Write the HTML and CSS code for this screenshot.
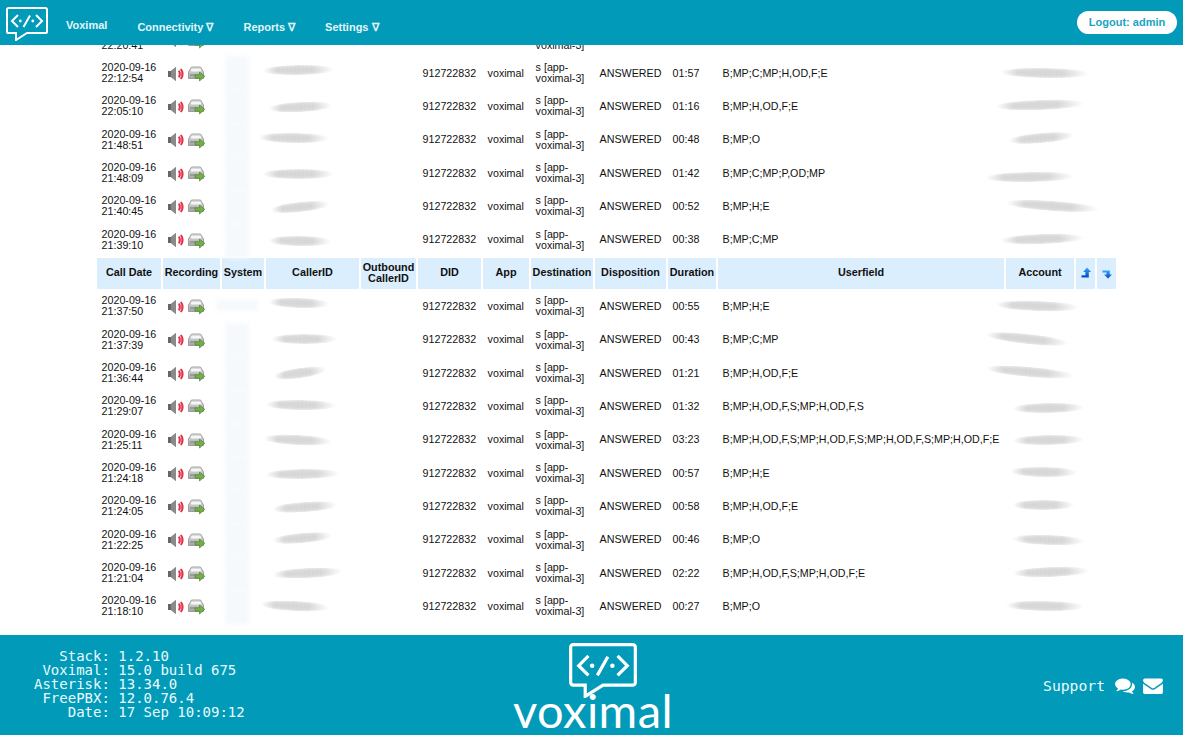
FILE: index.html
```html
<!DOCTYPE html>
<html lang="en">
<head>
<meta charset="utf-8">
<title>Voximal - CDR</title>
<link rel="stylesheet" href="styles.css">
</head>
<body>
<svg class="defs" width="0" height="0" aria-hidden="true">
  <defs>
    <linearGradient id="blue" x1="0" y1="0" x2="0" y2="1"><stop offset="0" stop-color="#3aa6ff"/><stop offset="1" stop-color="#0048c0"/></linearGradient>
    <linearGradient id="metal" x1="0" y1="0" x2="0" y2="1"><stop offset="0" stop-color="#e4e4e4"/><stop offset="1" stop-color="#a4a4a4"/></linearGradient>
    <symbol id="logo" viewBox="0 0 42 34">
      <path d="M2.600 1h36.800a1.600 1.600 0 0 1 1.600 1.600v21.800a1.600 1.600 0 0 1-1.600 1.600H21L10 33V26H2.600A1.600 1.600 0 0 1 1 24.400V2.600A1.600 1.600 0 0 1 2.600 1z" fill="none" stroke="#fff" stroke-width="2"/>
      <path d="M12 8 6 14 12 20M30 8 36 14 30 20M17.500 20 24 8.500" fill="none" stroke="#fff" stroke-width="2"/>
      <circle cx="14.300" cy="14" r="1.400" fill="#fff"/><circle cx="26.800" cy="14" r="1.400" fill="#fff"/>
    </symbol>
    <symbol id="spk" viewBox="0 0 17 14">
      <path d="M0 4h3l5-4v14l-5-4H0z" fill="#666"/><path d="M3 4l5-4v14l-5-4z" fill="#8a8a8a"/>
      <path d="M11.500 3c1.600 2.200 1.600 5.800 0 8l-1.500-1.200c1-1.500 1-4 0-5.600z" fill="#e0304a"/>
      <path d="M13.500 1.500c2.800 3 2.800 8 0 11l-1.500-1c2.300-2.800 2.300-6.200 0-9z" fill="#e0304a"/>
      <ellipse cx="13" cy="7" rx="1.200" ry="2.600" fill="#f0606f"/>
    </symbol>
    <symbol id="disk" viewBox="0 0 17 16">
      <path d="M3.500 1h9L15.500 6v6.500H.5V6z" fill="url(#metal)" stroke="#8f8f8f" stroke-width=".8"/>
      <rect x="3" y="3" width="10" height="2.600" rx="1" fill="#f6f6f6"/>
      <rect x="2" y="8" width="6" height="2" fill="#9a9a9a"/>
      <path d="M7 8.700h4.500V6L16.800 10.300 11.500 15v-2.800H7z" fill="#76ad4c" stroke="#4b8a2c" stroke-width=".7"/>
    </symbol>
    <symbol id="up" viewBox="0 0 10 11">
      <path d="M6 .500 10 5H7.800V10.500H.5V8.200H4.400V5H2.200z" fill="url(#blue)"/>
    </symbol>
    <symbol id="down" viewBox="0 0 10 9">
      <path d="M.5.500H7.800V4.500H10L6 8.500 2 4.500H4.500V2.500H.5z" fill="url(#blue)"/>
    </symbol>
  </defs>
</svg>

<header class="topbar">
  <svg class="logo-small"><use href="#logo"/></svg>
  <nav class="nav">
    <a class="nav-link nav-home">Voximal</a>
    <a class="nav-link">Connectivity ∇</a>
    <a class="nav-link">Reports ∇</a>
    <a class="nav-link">Settings ∇</a>
  </nav>
  <a class="logout">Logout: admin</a>
</header>

<main class="content">
<table class="cdr">
  <colgroup>
    <col class="c64"><col class="c57"><col class="c42"><col class="c93"><col class="c55"><col class="c63"><col class="c46"><col class="c62"><col class="c71"><col class="c48"><col class="c286"><col class="c68"><col class="c19"><col class="c19">
  </colgroup>
  <tbody>
  <tr><td>2020-09-16<br>22:20:41</td><td><span class="rec"><svg class="spk"><use href="#spk"/></svg><svg class="disk"><use href="#disk"/></svg></span></td><td></td><td></td><td></td><td>912722832</td><td>voximal</td><td>s [app-<br>voximal-3]</td><td>ANSWERED</td><td>00:31</td><td>B;MP;O</td><td></td><td></td><td></td></tr>

  <tr><td>2020-09-16<br>22:12:54</td><td><span class="rec"><svg class="spk"><use href="#spk"/></svg><svg class="disk"><use href="#disk"/></svg></span></td><td class="sm"><i class="sys"></i></td><td class="sm"><i class="blur" style="--l:-4px;--w:73px;--y:-4px;--r:-1deg"></i></td><td></td><td>912722832</td><td>voximal</td><td>s [app-<br>voximal-3]</td><td>ANSWERED</td><td>01:57</td><td>B;MP;C;MP;H,OD,F;E</td><td class="sm"><i class="blur" style="--l:-6px;--w:90px;--y:-1px;--r:1deg"></i></td><td></td><td></td></tr>

  <tr><td>2020-09-16<br>22:05:10</td><td><span class="rec"><svg class="spk"><use href="#spk"/></svg><svg class="disk"><use href="#disk"/></svg></span></td><td class="sm"><i class="sys"></i></td><td class="sm"><i class="blur" style="--l:2px;--w:65px;--y:0px;--r:-3deg"></i></td><td></td><td>912722832</td><td>voximal</td><td>s [app-<br>voximal-3]</td><td>ANSWERED</td><td>01:16</td><td>B;MP;H,OD,F;E</td><td class="sm"><i class="blur" style="--l:-11px;--w:90px;--y:-2px;--r:-2deg"></i></td><td></td><td></td></tr>

  <tr><td>2020-09-16<br>21:48:51</td><td><span class="rec"><svg class="spk"><use href="#spk"/></svg><svg class="disk"><use href="#disk"/></svg></span></td><td class="sm"><i class="sys"></i></td><td class="sm"><i class="blur" style="--l:-8px;--w:72px;--y:-2px;--r:1deg"></i></td><td></td><td>912722832</td><td>voximal</td><td>s [app-<br>voximal-3]</td><td>ANSWERED</td><td>00:48</td><td>B;MP;O</td><td class="sm"><i class="blur" style="--l:2px;--w:67px;--y:-2px;--r:-5deg"></i></td><td></td><td></td></tr>

  <tr><td>2020-09-16<br>21:48:09</td><td><span class="rec"><svg class="spk"><use href="#spk"/></svg><svg class="disk"><use href="#disk"/></svg></span></td><td class="sm"><i class="sys"></i></td><td class="sm"><i class="blur" style="--l:-4px;--w:73px;--y:0px;--r:0deg"></i></td><td></td><td>912722832</td><td>voximal</td><td>s [app-<br>voximal-3]</td><td>ANSWERED</td><td>01:42</td><td>B;MP;C;MP;P,OD;MP</td><td class="sm"><i class="blur" style="--l:-21px;--w:90px;--y:3px;--r:-1deg"></i></td><td></td><td></td></tr>

  <tr><td>2020-09-16<br>21:40:45</td><td><span class="rec"><svg class="spk"><use href="#spk"/></svg><svg class="disk"><use href="#disk"/></svg></span></td><td class="sm"><i class="sys"></i></td><td class="sm"><i class="blur" style="--l:4px;--w:60px;--y:0px;--r:-6deg"></i></td><td></td><td>912722832</td><td>voximal</td><td>s [app-<br>voximal-3]</td><td>ANSWERED</td><td>00:52</td><td>B;MP;H;E</td><td class="sm"><i class="blur" style="--l:-1px;--w:95px;--y:-1px;--r:4deg"></i></td><td></td><td></td></tr>

  <tr><td>2020-09-16<br>21:39:10</td><td><span class="rec"><svg class="spk"><use href="#spk"/></svg><svg class="disk"><use href="#disk"/></svg></span></td><td class="sm"><i class="sys"></i></td><td class="sm"><i class="blur" style="--l:2px;--w:64px;--y:1px;--r:1deg"></i></td><td></td><td>912722832</td><td>voximal</td><td>s [app-<br>voximal-3]</td><td>ANSWERED</td><td>00:38</td><td>B;MP;C;MP</td><td class="sm"><i class="blur" style="--l:-6px;--w:85px;--y:-1px;--r:-2deg"></i></td><td></td><td></td></tr>

  <tr class="head"><th>Call Date</th><th>Recording</th><th>System</th><th>CallerID</th><th>Outbound CallerID</th><th>DID</th><th>App</th><th>Destination</th><th>Disposition</th><th>Duration</th><th>Userfield</th><th>Account</th><th><svg class="arrow-up"><use href="#up"/></svg></th><th><svg class="arrow-down"><use href="#down"/></svg></th></tr>

  <tr><td>2020-09-16<br>21:37:50</td><td><span class="rec"><svg class="spk"><use href="#spk"/></svg><svg class="disk"><use href="#disk"/></svg></span></td><td class="sm"><i class="sys sys-wide"></i></td><td class="sm"><i class="blur" style="--l:2px;--w:62px;--y:-4px;--r:2deg"></i></td><td></td><td>912722832</td><td>voximal</td><td>s [app-<br>voximal-3]</td><td>ANSWERED</td><td>00:55</td><td>B;MP;H;E</td><td class="sm"><i class="blur" style="--l:-11px;--w:85px;--y:-1px;--r:2deg"></i></td><td></td><td></td></tr>

  <tr><td>2020-09-16<br>21:37:39</td><td><span class="rec"><svg class="spk"><use href="#spk"/></svg><svg class="disk"><use href="#disk"/></svg></span></td><td class="sm"><i class="sys"></i></td><td class="sm"><i class="blur" style="--l:5px;--w:67px;--y:-1px;--r:0deg"></i></td><td></td><td>912722832</td><td>voximal</td><td>s [app-<br>voximal-3]</td><td>ANSWERED</td><td>00:43</td><td>B;MP;C;MP</td><td class="sm"><i class="blur" style="--l:-21px;--w:85px;--y:-1px;--r:6deg"></i></td><td></td><td></td></tr>

  <tr><td>2020-09-16<br>21:36:44</td><td><span class="rec"><svg class="spk"><use href="#spk"/></svg><svg class="disk"><use href="#disk"/></svg></span></td><td class="sm"><i class="sys"></i></td><td class="sm"><i class="blur" style="--l:7px;--w:54px;--y:-1px;--r:-8deg"></i></td><td></td><td>912722832</td><td>voximal</td><td>s [app-<br>voximal-3]</td><td>ANSWERED</td><td>01:21</td><td>B;MP;H,OD,F;E</td><td class="sm"><i class="blur" style="--l:-21px;--w:90px;--y:-2px;--r:5deg"></i></td><td></td><td></td></tr>

  <tr><td>2020-09-16<br>21:29:07</td><td><span class="rec"><svg class="spk"><use href="#spk"/></svg><svg class="disk"><use href="#disk"/></svg></span></td><td class="sm"><i class="sys"></i></td><td class="sm"><i class="blur" style="--l:-1px;--w:72px;--y:-2px;--r:1deg"></i></td><td></td><td>912722832</td><td>voximal</td><td>s [app-<br>voximal-3]</td><td>ANSWERED</td><td>01:32</td><td>B;MP;H,OD,F,S;MP;H,OD,F,S</td><td class="sm"><i class="blur" style="--l:6px;--w:73px;--y:1px;--r:-1deg"></i></td><td></td><td></td></tr>

  <tr><td>2020-09-16<br>21:25:11</td><td><span class="rec"><svg class="spk"><use href="#spk"/></svg><svg class="disk"><use href="#disk"/></svg></span></td><td class="sm"><i class="sys"></i></td><td class="sm"><i class="blur" style="--l:-3px;--w:70px;--y:0px;--r:3deg"></i></td><td></td><td>912722832</td><td>voximal</td><td>s [app-<br>voximal-3]</td><td>ANSWERED</td><td>03:23</td><td>B;MP;H,OD,F,S;MP;H,OD,F,S;MP;H,OD,F,S;MP;H,OD,F;E</td><td class="sm"><i class="blur" style="--l:6px;--w:73px;--y:0px;--r:-1deg"></i></td><td></td><td></td></tr>

  <tr><td>2020-09-16<br>21:24:18</td><td><span class="rec"><svg class="spk"><use href="#spk"/></svg><svg class="disk"><use href="#disk"/></svg></span></td><td class="sm"><i class="sys"></i></td><td class="sm"><i class="blur" style="--l:-1px;--w:75px;--y:0px;--r:-1deg"></i></td><td></td><td>912722832</td><td>voximal</td><td>s [app-<br>voximal-3]</td><td>ANSWERED</td><td>00:57</td><td>B;MP;H;E</td><td class="sm"><i class="blur" style="--l:4px;--w:68px;--y:-2px;--r:1deg"></i></td><td></td><td></td></tr>

  <tr><td>2020-09-16<br>21:24:05</td><td><span class="rec"><svg class="spk"><use href="#spk"/></svg><svg class="disk"><use href="#disk"/></svg></span></td><td class="sm"><i class="sys"></i></td><td class="sm"><i class="blur" style="--l:6px;--w:66px;--y:0px;--r:-4deg"></i></td><td></td><td>912722832</td><td>voximal</td><td>s [app-<br>voximal-3]</td><td>ANSWERED</td><td>00:58</td><td>B;MP;H,OD,F;E</td><td class="sm"><i class="blur" style="--l:6px;--w:63px;--y:-2px;--r:0deg"></i></td><td></td><td></td></tr>

  <tr><td>2020-09-16<br>21:22:25</td><td><span class="rec"><svg class="spk"><use href="#spk"/></svg><svg class="disk"><use href="#disk"/></svg></span></td><td class="sm"><i class="sys"></i></td><td class="sm"><i class="blur" style="--l:6px;--w:61px;--y:-2px;--r:-5deg"></i></td><td></td><td>912722832</td><td>voximal</td><td>s [app-<br>voximal-3]</td><td>ANSWERED</td><td>00:46</td><td>B;MP;O</td><td class="sm"><i class="blur" style="--l:6px;--w:73px;--y:0px;--r:2deg"></i></td><td></td><td></td></tr>

  <tr><td>2020-09-16<br>21:21:04</td><td><span class="rec"><svg class="spk"><use href="#spk"/></svg><svg class="disk"><use href="#disk"/></svg></span></td><td class="sm"><i class="sys"></i></td><td class="sm"><i class="blur" style="--l:6px;--w:71px;--y:-1px;--r:-3deg"></i></td><td></td><td>912722832</td><td>voximal</td><td>s [app-<br>voximal-3]</td><td>ANSWERED</td><td>02:22</td><td>B;MP;H,OD,F,S;MP;H,OD,F;E</td><td class="sm"><i class="blur" style="--l:6px;--w:78px;--y:-2px;--r:-2deg"></i></td><td></td><td></td></tr>

  <tr><td>2020-09-16<br>21:18:10</td><td><span class="rec"><svg class="spk"><use href="#spk"/></svg><svg class="disk"><use href="#disk"/></svg></span></td><td class="sm"><i class="sys"></i></td><td class="sm"><i class="blur" style="--l:-6px;--w:70px;--y:-1px;--r:3deg"></i></td><td></td><td>912722832</td><td>voximal</td><td>s [app-<br>voximal-3]</td><td>ANSWERED</td><td>00:27</td><td>B;MP;O</td><td class="sm"><i class="blur" style="--l:-1px;--w:80px;--y:-1px;--r:1deg"></i></td><td></td><td></td></tr>
  </tbody>
</table>
</main>

<footer class="bottombar">
  <pre class="versions">   Stack: 1.2.10
 Voximal: 15.0 build 675
Asterisk: 13.34.0
 FreePBX: 12.0.76.4
    Date: 17 Sep 10:09:12</pre>
  <div class="brand">
    <svg class="logo-large"><use href="#logo"/></svg>
    <span class="wordmark">voximal</span>
  </div>
  <div class="support">
    <span>Support</span>
    <svg class="fa" viewBox="0 128 1792 1536"><path d="M1408 768q0 139-94 257t-256.500 186.500-353.500 68.500q-86 0-176-16-124 88-278 128-36 9-86 16h-3q-11 0-20.500-8t-11.500-21q-1-3-1-6.500t.5-6.500 2-6l2.500-5 3.500-5.500 4-5 4.500-5 4-4.500q5-6 23-25t26-29.500 22.500-29 25-38.500 20.500-44q-124-72-195-177t-71-224q0-139 94-257t256.500-186.500 353.500-68.500 353.500 68.500 256.500 186.500 94 257zm384 256q0 120-71 224.500t-195 176.500q10 24 20.500 44t25 38.500 22.500 29 26 29.500 23 25q1 1 4 4.500t4.500 5 4 5 3.500 5.500l2.500 5 2 6 .5 6.500-1 6.500q-3 14-13 22t-22 7q-50-7-86-16-154-40-278-128-90 16-176 16-271 0-472-132 58 4 88 4 161 0 309-45t264-129q125-92 192-212t67-254q0-77-23-152 129 71 204 178t75 230z"/></svg>
    <svg class="fa" viewBox="0 128 1792 1536"><path d="M1792 710v794q0 66-47 113t-113 47h-1472q-66 0-113-47t-47-113v-794q44 49 101 87 362 246 497 345 57 42 92.500 65.500t94.500 48 110 24.500h2q51 0 110-24.500t94.500-48 92.500-65.500q170-123 498-345 57-39 100-87zm0-294q0 79-49 151t-122 123q-376 261-468 325-10 7-42.500 30.500t-54 38-52 32.500-57.500 27-50 9h-2q-23 0-50-9t-57.500-27-52-32.500-54-38-42.500-30.500q-91-64-262-182.500t-205-142.500q-62-42-117-115.500t-55-136.500q0-78 41.500-130t118.500-52h1472q65 0 112.500 47t47.500 113z"/></svg>
  </div>
</footer>
</body>
</html>
```

FILE: styles.css
```css
* { box-sizing: border-box; }
html, body { height: 100%; }
body {
  margin: 0;
  display: flex;
  flex-direction: column;
  height: 100vh;
  overflow: hidden;
  background: #fff;
  color: #111;
  font: 10.7px/11px "Liberation Sans", Arial, sans-serif;
}
.defs { position: absolute; }

/* top bar */
.topbar {
  position: relative;
  z-index: 2;
  flex: 0 0 45px;
  display: flex;
  align-items: center;
  padding: 0 6px;
  background: #019ab8;
}
.logo-small { width: 42px; height: 34px; margin-top: 3px; flex: none; }
.nav {
  display: flex;
  align-items: center;
  gap: 30px;
  margin-left: 18px;
  padding-top: 9px;
}
.nav-link { color: #e4f6f9; font-weight: 700; font-size: 11px; }
.nav-home { margin-top: -3px; }
.logout {
  margin-left: auto;
  width: 100px;
  height: 23px;
  font-size: 11px;
  line-height: 23px;
  text-align: center;
  border-radius: 12px;
  background: #fff;
  color: #1aa3bf;
  font-weight: 700;
}

/* table */
.content { flex: 1 1 0; min-height: 0; overflow: hidden; }
.cdr {
  table-layout: fixed;
  width: 1023px;
  margin: -22.33px 0 0 95px;
  border-collapse: separate;
  border-spacing: 2px;
}
.c64 { width: 64px; } .c57 { width: 57px; } .c42 { width: 42px; } .c93 { width: 93px; }
.c55 { width: 55px; } .c63 { width: 63px; } .c46 { width: 46px; } .c62 { width: 62px; }
.c71 { width: 71px; } .c48 { width: 48px; } .c286 { width: 286px; } .c68 { width: 68px; }
.c19 { width: 19px; }
.cdr td, .cdr th {
  height: 31.33px;
  padding: 0 5px 1px 4.6px;
  vertical-align: middle;
  white-space: nowrap;
}
.cdr td { text-align: left; color: #111; }
.cdr th {
  padding: 0 0 2px;
  background: #daeefd;
  color: #111;
  font-size: 10.8px;
  font-weight: 700;
  text-align: center;
  white-space: normal;
}
.rec { display: flex; align-items: center; gap: 3px; margin-top: 1px; padding-left: .4px; }
.spk { width: 17px; height: 14px; flex: none; }
.disk { width: 17px; height: 16px; flex: none; margin-top: 1px; }
.arrow-up { width: 10px; height: 11px; display: inline-block; vertical-align: -1px; }
.arrow-down { width: 10px; height: 9px; display: inline-block; vertical-align: -3px; }

/* anonymised values: blurred smears laid over the cell */
.sm { position: relative; }
.blur {
  position: absolute;
  left: var(--l);
  width: var(--w);
  top: calc(50% - 5px + var(--y));
  height: 10px;
  border-radius: 50%;
  background: repeating-linear-gradient(90deg, #888 0 2px, #cfcfcf 2px 4px);
  opacity: .47;
  filter: blur(1.5px);
  transform: rotate(var(--r));
  -webkit-mask-image: linear-gradient(90deg, transparent, #000 20%, #000 70%, transparent);
  mask-image: linear-gradient(90deg, transparent, #000 20%, #000 70%, transparent);
}
.sys {
  position: absolute;
  left: 3px;
  top: -2px;
  bottom: -2px;
  width: 24px;
  background: #f6f9fc;
  filter: blur(2.5px);
}
.sys-wide { left: -6px; width: 42px; height: 12px; bottom: auto; top: 8px; }

/* footer */
.bottombar {
  flex: 0 0 100px;
  display: grid;
  grid-template-columns: 1fr auto 1fr;
  background: #019ab8;
  color: #fff;
}
.versions {
  margin: 0;
  padding: 14px 0 0 34px;
  font: 14px/14px "DejaVu Sans Mono", monospace;
  color: #eafafd;
}
.brand { display: flex; flex-direction: column; align-items: center; padding-top: 8px; }
.logo-large { width: 68px; height: 55px; flex: none; margin-left: 22px; }
.wordmark {
  margin-top: -9px;
  margin-left: 3px;
  color: #fff;
  font: 400 47px/42px Lato, sans-serif;
  letter-spacing: .4px;
  white-space: nowrap;
}
.support {
  display: flex;
  align-items: center;
  justify-content: flex-end;
  gap: 8px;
  padding: 0 20px 0 0;
  height: 100px;
  font: 14.700px "DejaVu Sans Mono", monospace;
  color: #eafafd;
}
.fa { width: 20px; height: 17px; fill: #fff; flex: none; }
.support span { margin-right: 2px; }
```
